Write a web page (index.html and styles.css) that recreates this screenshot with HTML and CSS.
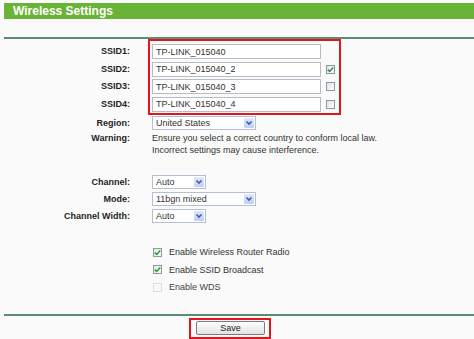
FILE: index.html
```html
<!DOCTYPE html>
<html lang="en">
<head>
    <meta charset="UTF-8">
    <meta name="viewport" content="width=device-width, initial-scale=1.0">
    <title>Wireless Settings</title>
    <link rel="stylesheet" href="styles.css">
</head>
<body>
    <div class="page">
        <div class="title-bar">Wireless Settings</div>
        <div class="rule"></div>

        <form class="form">
            <!-- SSID block -->
            <div class="ssid">
                <div class="ssid__labels">
                    <div class="ssid__label">SSID1:</div>
                    <div class="ssid__label">SSID2:</div>
                    <div class="ssid__label">SSID3:</div>
                    <div class="ssid__label">SSID4:</div>
                </div>
                <div class="ssid__box">
                    <div class="ssid__row">
                        <input type="text" class="text-input" value="TP-LINK_015040">
                    </div>
                    <div class="ssid__row">
                        <input type="text" class="text-input" value="TP-LINK_015040_2">
                        <span class="check check--on"><svg viewBox="0 0 9 9" width="9" height="9"><path d="M1.8 4.6 L3.7 6.4 L7.2 2.4" fill="none" stroke="#2e9a35" stroke-width="1.5"/></svg></span>
                    </div>
                    <div class="ssid__row">
                        <input type="text" class="text-input" value="TP-LINK_015040_3">
                        <span class="check"></span>
                    </div>
                    <div class="ssid__row">
                        <input type="text" class="text-input" value="TP-LINK_015040_4">
                        <span class="check"></span>
                    </div>
                </div>
            </div>

            <div class="field field--region">
                <div class="field__label">Region:</div>
                <div class="select select--wide">
                    <span class="select__text">United States</span>
                    <span class="select__arrow"><svg viewBox="0 0 10 12" width="10" height="12"><path d="M2.5 4.5 L5 7 L7.5 4.5" fill="none" stroke="#3f5f9e" stroke-width="1.6"/></svg></span>
                </div>
            </div>

            <div class="field field--warning">
                <div class="field__label">Warning:</div>
                <div class="field__note">
                    Ensure you select a correct country to conform local law.<br>
                    Incorrect settings may cause interference.
                </div>
            </div>

            <div class="radio-settings">
                <div class="field">
                    <div class="field__label">Channel:</div>
                    <div class="select select--narrow">
                        <span class="select__text">Auto</span>
                        <span class="select__arrow"><svg viewBox="0 0 10 12" width="10" height="12"><path d="M2.5 4.5 L5 7 L7.5 4.5" fill="none" stroke="#3f5f9e" stroke-width="1.6"/></svg></span>
                    </div>
                </div>
                <div class="field">
                    <div class="field__label">Mode:</div>
                    <div class="select select--wide">
                        <span class="select__text">11bgn mixed</span>
                        <span class="select__arrow"><svg viewBox="0 0 10 12" width="10" height="12"><path d="M2.5 4.5 L5 7 L7.5 4.5" fill="none" stroke="#3f5f9e" stroke-width="1.6"/></svg></span>
                    </div>
                </div>
                <div class="field">
                    <div class="field__label">Channel Width:</div>
                    <div class="select select--narrow">
                        <span class="select__text">Auto</span>
                        <span class="select__arrow"><svg viewBox="0 0 10 12" width="10" height="12"><path d="M2.5 4.5 L5 7 L7.5 4.5" fill="none" stroke="#3f5f9e" stroke-width="1.6"/></svg></span>
                    </div>
                </div>
            </div>

            <div class="options">
                <label class="option">
                    <span class="check check--on"><svg viewBox="0 0 9 9" width="9" height="9"><path d="M1.8 4.6 L3.7 6.4 L7.2 2.4" fill="none" stroke="#2e9a35" stroke-width="1.5"/></svg></span>
                    Enable Wireless Router Radio
                </label>
                <label class="option">
                    <span class="check check--on"><svg viewBox="0 0 9 9" width="9" height="9"><path d="M1.8 4.6 L3.7 6.4 L7.2 2.4" fill="none" stroke="#2e9a35" stroke-width="1.5"/></svg></span>
                    Enable SSID Broadcast
                </label>
                <label class="option option--disabled">
                    <span class="check check--disabled"></span>
                    Enable WDS
                </label>
            </div>
        </form>

        <div class="rule rule--bottom"></div>

        <div class="actions">
            <span class="save-frame">
                <button type="button" class="button">Save</button>
            </span>
        </div>
    </div>
</body>
</html>
```

FILE: styles.css
```css
:root {
    --color-bg: #f9faf9;
    --color-green: #69b336;
    --color-rule: #5b8c74;
    --color-label: #1e1e1e;
    --color-text: #333;
    --color-highlight: #e2161d;
}

body {
    margin: 0;
    background-color: var(--color-bg);
    font-family: 'Liberation Sans', Arial, sans-serif;
    font-size: 9px;
    color: var(--color-text);
}

.page {
    width: 474px;
    height: 339px;
    overflow: hidden;
}

.title-bar {
    margin: 3px 0 0 4px;
    height: 16px;
    line-height: 16px;
    padding-left: 9px;
    background-color: var(--color-green);
    color: #fff;
    font-size: 12px;
    font-weight: bold;
}

.rule {
    margin: 18px 0 0 4px;
    height: 2px;
    background-color: var(--color-rule);
}

.rule--bottom {
    margin-top: 18px;
}

/* SSID block */
.ssid {
    display: flex;
}

.ssid__labels {
    width: 130px;
    padding-top: 4px;
}

.ssid__label,
.field__label {
    font-weight: bold;
    color: var(--color-label);
    text-align: right;
}

.ssid__label {
    height: 17.5px;
    line-height: 17.5px;
}

.ssid__box {
    margin-left: 18px;
    width: 187px;
    padding: 2px 0 0 2px;
    border: 2px solid var(--color-highlight);
}

.ssid__row {
    display: flex;
    align-items: center;
    gap: 5px;
    height: 17.5px;
}

.text-input {
    box-sizing: border-box;
    width: 169px;
    height: 15px;
    margin: 0;
    padding: 0 3px;
    border: 1px solid #b5bcc4;
    background-color: #fff;
    font-family: inherit;
    font-size: 9px;
    color: var(--color-text);
}

.check {
    box-sizing: border-box;
    display: inline-flex;
    width: 9px;
    height: 9px;
    border: 1px solid #8d98a3;
    background: linear-gradient(135deg, #e3e5e7, #fbfbfb);
}

.check svg {
    margin: -1px;
}

.check--disabled {
    border-color: #dedede;
    background: #f8f8f8;
}

/* form rows */
.field {
    display: flex;
    align-items: center;
    height: 17px;
}

.field__label {
    width: 130px;
    margin-right: 22px;
}

.field--region {
    height: 15px;
}

.field--warning {
    align-items: flex-start;
    height: auto;
    padding-top: 2px;
    line-height: 12px;
}

.field__note {
    color: var(--color-text);
}

.radio-settings {
    margin-top: 17.5px;
}

.select {
    box-sizing: border-box;
    display: flex;
    align-items: center;
    justify-content: space-between;
    height: 14px;
    padding: 0 1px 0 3px;
    border: 1px solid #b4c0cf;
    background-color: #fff;
}

.select--wide {
    width: 104px;
}

.select--narrow {
    width: 54px;
}

.select__arrow {
    display: flex;
    align-items: center;
    justify-content: center;
    width: 10px;
    height: 10px;
    background: linear-gradient(#dfe8fb, #bccff5);
    border-radius: 1px;
}

/* checkbox options */
.options {
    margin: 18.75px 0 0 153px;
}

.option {
    display: flex;
    align-items: center;
    gap: 7px;
    height: 17.5px;
}

.option--disabled {
    color: #444;
}

/* save */
.actions {
    padding: 2px 0 0 189px;
}

.save-frame {
    display: inline-block;
    padding: 1px 4px 2px 5px;
    border: 2px solid var(--color-highlight);
}

.button {
    display: block;
    width: 69px;
    height: 14px;
    padding: 0;
    border: 1px solid #7c7c7c;
    border-radius: 2px;
    background: linear-gradient(#fefefe, #e3e3e3);
    font-family: inherit;
    font-size: 9px;
    color: #222;
}
```
